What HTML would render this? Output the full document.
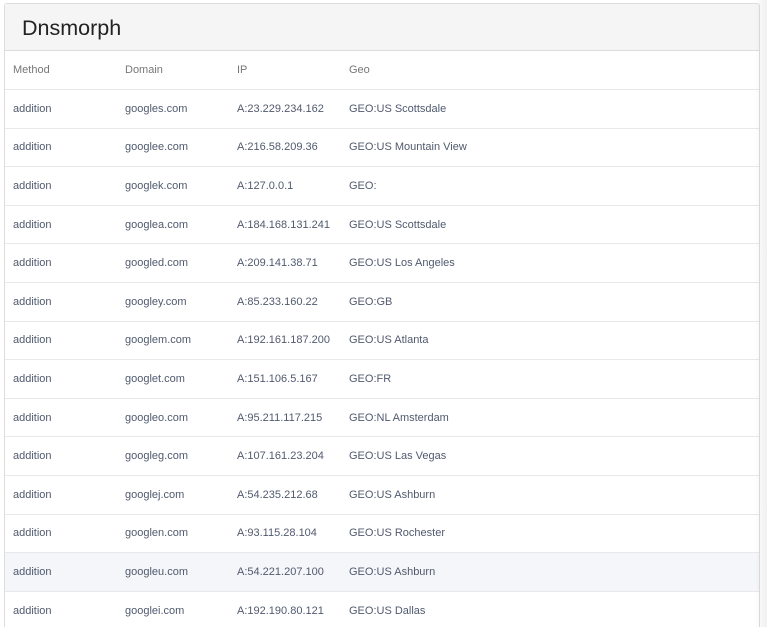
<!DOCTYPE html><html><head><style>
html,body{margin:0;background:#fff;font-family:"Liberation Sans",sans-serif;width:767px;height:627px;overflow:hidden}
body{position:relative}
.p{position:absolute;left:4px;top:3px;width:754px;height:640px;border:1px solid #ddd;border-radius:3px;background:#fff}
.h{height:46px;background:#f5f5f5;border-bottom:1px solid #ddd;border-radius:3px 3px 0 0}
.h span{position:absolute;left:17px;top:12px;font-size:21.5px;color:#222}
table{border-collapse:collapse;width:100%;font-size:11px;color:#505a6e}
td,th{height:37.6px;padding:0 0 0 8px;text-align:left;border-bottom:1px solid #e8e8e8;vertical-align:middle}
th{font-weight:normal;color:#777;height:38px}
td:nth-child(1),th:nth-child(1){width:104px}
td:nth-child(2),th:nth-child(2){width:104px}
td:nth-child(3),th:nth-child(3){width:104px}
tr.hl td{background:#f5f6f9}
.sh{position:absolute;right:0;top:0;width:12px;height:627px;background:linear-gradient(to right,rgba(0,0,0,0),rgba(0,0,0,.06))}
</style></head><body>
<div class="p"><div class="h"><span>Dnsmorph</span></div>
<table>
<tr><th>Method</th><th>Domain</th><th>IP</th><th>Geo</th></tr>
<tr><td>addition</td><td>googles.com</td><td>A:23.229.234.162</td><td>GEO:US Scottsdale</td></tr>
<tr><td>addition</td><td>googlee.com</td><td>A:216.58.209.36</td><td>GEO:US Mountain View</td></tr>
<tr><td>addition</td><td>googlek.com</td><td>A:127.0.0.1</td><td>GEO:</td></tr>
<tr><td>addition</td><td>googlea.com</td><td>A:184.168.131.241</td><td>GEO:US Scottsdale</td></tr>
<tr><td>addition</td><td>googled.com</td><td>A:209.141.38.71</td><td>GEO:US Los Angeles</td></tr>
<tr><td>addition</td><td>googley.com</td><td>A:85.233.160.22</td><td>GEO:GB</td></tr>
<tr><td>addition</td><td>googlem.com</td><td>A:192.161.187.200</td><td>GEO:US Atlanta</td></tr>
<tr><td>addition</td><td>googlet.com</td><td>A:151.106.5.167</td><td>GEO:FR</td></tr>
<tr><td>addition</td><td>googleo.com</td><td>A:95.211.117.215</td><td>GEO:NL Amsterdam</td></tr>
<tr><td>addition</td><td>googleg.com</td><td>A:107.161.23.204</td><td>GEO:US Las Vegas</td></tr>
<tr><td>addition</td><td>googlej.com</td><td>A:54.235.212.68</td><td>GEO:US Ashburn</td></tr>
<tr><td>addition</td><td>googlen.com</td><td>A:93.115.28.104</td><td>GEO:US Rochester</td></tr>
<tr class="hl"><td>addition</td><td>googleu.com</td><td>A:54.221.207.100</td><td>GEO:US Ashburn</td></tr>
<tr><td>addition</td><td>googlei.com</td><td>A:192.190.80.121</td><td>GEO:US Dallas</td></tr>
</table></div>
<div class="sh"></div>
</body></html>
